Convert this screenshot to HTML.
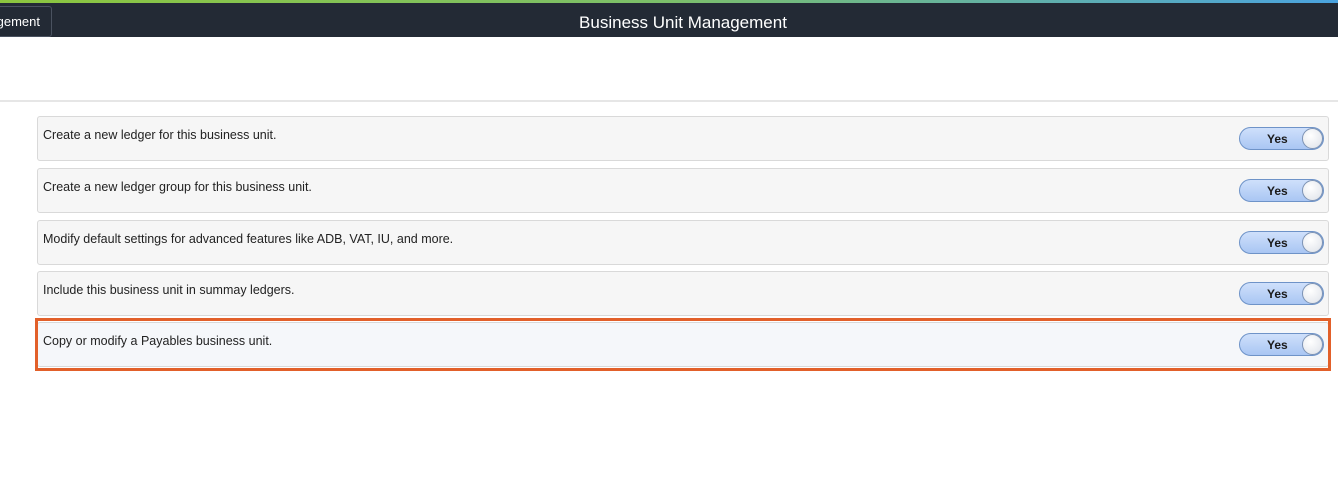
<!DOCTYPE html>
<html><head><meta charset="utf-8"><style>
*{margin:0;padding:0;box-sizing:border-box}
body{width:1338px;height:486px;background:#fff;font-family:"Liberation Sans",Arial,sans-serif;position:relative;overflow:hidden}
.strip{position:absolute;left:0;top:0;width:1338px;height:3px;background:linear-gradient(90deg,#8cc63f,#7cbf6a 50%,#4aa3e0)}
.bar{position:absolute;left:0;top:3px;width:1338px;height:34px;background:#232a35}
.btn{position:absolute;left:-8px;top:3px;width:60px;height:31px;border:1px solid #4a5260;border-radius:3px;color:#fff;font-size:13px;line-height:29px;text-align:right;padding-right:11px}
.title{position:absolute;left:0;width:1366px;top:10px;text-align:center;color:#fff;font-size:17px}
.hr{position:absolute;left:0;top:100px;width:1338px;height:2px;background:#e6e6e6}
.row{position:absolute;left:37px;width:1292px;height:45px;background:#f6f6f6;border:1px solid #d9d9d9;border-radius:3px}
.row span{position:absolute;left:5px;top:11px;font-size:12.5px;color:#222}
.tg{position:absolute;left:1201px;top:10px;width:85px;height:23px;border:1px solid #6e93c8;border-radius:12px;background:linear-gradient(#cfe0fb,#a9c6f3)}
.tg b{position:absolute;left:27px;top:4px;font-size:12px;color:#1a1a1a}
.tg i{position:absolute;right:0;top:0;width:21px;height:21px;border-radius:50%;background:radial-gradient(circle at 40% 35%,#fff,#dde1e8);border:1px solid #7d93b4}
.hl{position:absolute;left:35px;top:318px;width:1296px;height:53px;border:3px solid #e2602a}
</style></head><body>
<div class="strip"></div>
<div class="bar"><div class="btn">gement</div><div class="title">Business Unit Management</div></div>
<div class="hr"></div>
<div class="row" style="top:116px"><span>Create a new ledger for this business unit.</span><div class="tg"><b>Yes</b><i></i></div></div>
<div class="row" style="top:168px"><span>Create a new ledger group for this business unit.</span><div class="tg"><b>Yes</b><i></i></div></div>
<div class="row" style="top:220px"><span>Modify default settings for advanced features like ADB, VAT, IU, and more.</span><div class="tg"><b>Yes</b><i></i></div></div>
<div class="row" style="top:271px"><span>Include this business unit in summay ledgers.</span><div class="tg"><b>Yes</b><i></i></div></div>
<div class="row" style="top:322px;background:#f5f7fa"><span>Copy or modify a Payables business unit.</span><div class="tg"><b>Yes</b><i></i></div></div>
<div class="hl"></div>
</body></html>
